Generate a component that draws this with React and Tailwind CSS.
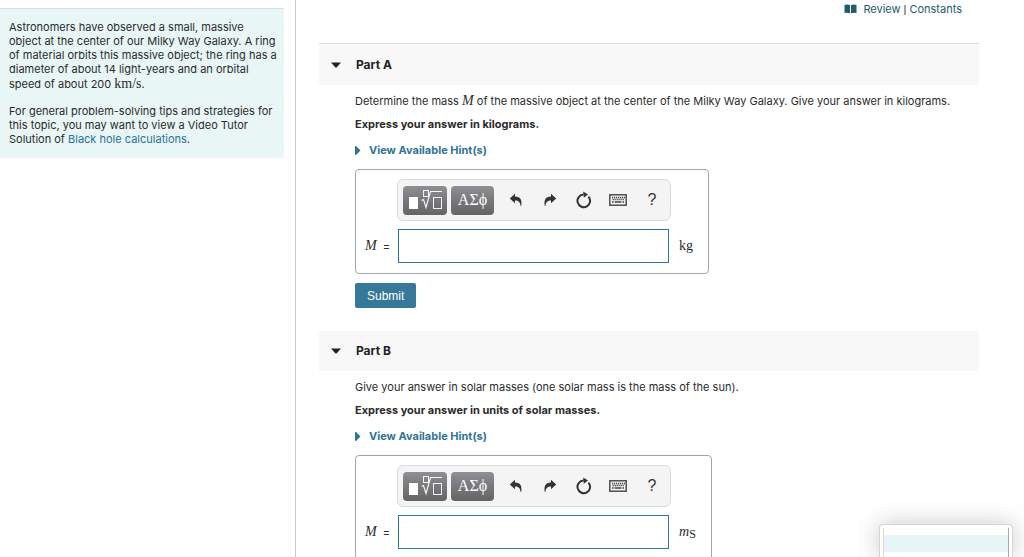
import React from 'react';

const MathText = ({ italic, children }) => (
  <span
    className={`font-['Liberation_Serif','Times_New_Roman',serif] text-sm leading-4 ${
      italic ? 'italic' : ''
    }`}
  >
    {children}
  </span>
);

const BookIcon = () => (
  <svg width="13" height="10" viewBox="0 0 13 10" fill="#245a70" aria-hidden="true">
    <path d="M0.5 1 Q3 0 6 1 V9.3 Q3 8.4 0.5 9.1Z" />
    <path d="M7 1 Q10 0 12.5 1 V9.1 Q10 8.4 7 9.3Z" />
  </svg>
);

const TemplatesIcon = () => (
  <svg width="34" height="22" viewBox="0 0 34 22" fill="none" stroke="#f4f4f4" aria-hidden="true">
    <rect x="1" y="8" width="9" height="12" fill="#fff" stroke="none" />
    <rect x="15.5" y="1.5" width="5" height="6" />
    <path d="M13.5 11.5 L15.5 10.5 L18 18.5 L22.5 2.5 H34" strokeWidth="1.2" />
    <rect x="25.5" y="8.5" width="8" height="11" />
  </svg>
);

const UndoIcon = () => (
  <svg width="14" height="14" viewBox="0 0 14 14" fill="#333" aria-hidden="true">
    <path d="M0.8 5.4 L6 0.8 V3.6 C10.8 3.6 13.4 6.6 12.2 13 H11.6 C11.2 9.2 9.4 7.6 6 7.6 V10.2 Z" />
  </svg>
);

const RedoIcon = () => (
  <svg width="14" height="14" viewBox="0 0 14 14" fill="#333" aria-hidden="true">
    <path d="M13.2 5.4 L8 0.8 V3.6 C3.2 3.6 0.6 6.6 1.8 13 H2.4 C2.8 9.2 4.6 7.6 8 7.6 V10.2 Z" />
  </svg>
);

const ResetIcon = () => (
  <svg width="16" height="18" viewBox="0 0 16 18" aria-hidden="true">
    <path d="M12.4 5.6 A6.3 6.3 0 1 1 7.6 3.6" fill="none" stroke="#333" strokeWidth="2" />
    <path d="M7.2 0.4 L12 3.6 L7.8 6.8 Z" fill="#333" />
  </svg>
);

const KeyboardIcon = () => (
  <svg width="18" height="12" viewBox="0 0 18 12" fill="none" stroke="#444" aria-hidden="true">
    <rect x="0.8" y="0.8" width="16.4" height="10.4" strokeWidth="1.4" />
    <path d="M3 3.5 H16 M3.6 5.5 H15" strokeWidth="1.4" strokeDasharray="1.2 0.8" />
    <path d="M3 8 H4.6 M5.6 8 H12.4 M13.4 8 H15" strokeWidth="1.5" />
  </svg>
);

const tools = [
  { label: 'Undo', icon: UndoIcon },
  { label: 'Redo', icon: RedoIcon },
  { label: 'Reset', icon: ResetIcon },
  { label: 'Keyboard shortcuts', icon: KeyboardIcon }
];

const darkButton =
  'flex h-[29px] items-center justify-center rounded-[4px] bg-linear-to-b from-[#8e8e94] to-[#646464] text-white';

const Toolbar = () => (
  <div className="flex h-[42px] items-center rounded-md border border-[#dcdcdc] bg-[#f4f4f4] pl-[5px]">
    <button type="button" aria-label="Templates" className={`${darkButton} w-11`}>
      <TemplatesIcon />
    </button>
    <button
      type="button"
      aria-label="Symbols"
      className={`${darkButton} ml-1 w-[43px] font-['Liberation_Serif','Times_New_Roman',serif] text-base leading-none`}
    >
      ΑΣϕ
    </button>
    <div className="ml-[5px] flex">
      {tools.map(({ label, icon: Icon }) => (
        <button
          key={label}
          type="button"
          aria-label={label}
          className="flex h-7 w-[34px] items-center justify-center"
        >
          <Icon />
        </button>
      ))}
      <button
        type="button"
        aria-label="Help"
        className="h-7 w-[34px] font-['Liberation_Sans',Arial,sans-serif] text-base text-[#333]"
      >
        ?
      </button>
    </div>
  </div>
);

const AnswerBox = ({ id, unit }) => (
  <form className="inline-grid grid-cols-[33px_271px_auto] items-center rounded-[4px] border border-[#a5a5a5] pt-[9px] pr-[15px] pb-[10px] pl-[9px]">
    <div className="col-start-2 -mx-px w-[274px]">
      <Toolbar />
    </div>
    <label htmlFor={id} className="col-start-1 mt-2 flex items-center gap-[6px]">
      <MathText italic>M</MathText>
      <span>=</span>
    </label>
    <input
      id={id}
      type="text"
      className="mt-2 h-[34px] w-full border border-[#2f7599] bg-white px-2 outline-none"
    />
    <span className="mt-2 pl-[10px]">{unit}</span>
  </form>
);

const Part = ({ id, title, question, instruction, unit, bordered, children }) => (
  <section>
    <h2
      className={`flex items-center bg-[#f8f8f8] text-xs font-bold text-[#222] ${
        bordered ? 'h-[42px] border-t border-[#dcdfdf]' : 'h-10'
      }`}
    >
      <button type="button" className="flex items-center gap-[15px] pl-3">
        <svg width="10" height="6" viewBox="0 0 10 6" fill="#222" aria-hidden="true">
          <path d="M0 0.5 H10 L5.5 5.5 H4.5Z" />
        </svg>
        {title}
      </button>
    </h2>
    <div className="flex flex-col items-start pt-2 pl-9 leading-4">
      <p>{question}</p>
      <p className="mt-[7px] font-bold">{instruction}</p>
      <button
        type="button"
        className="mt-[10px] mb-[11px] flex items-center gap-2 font-bold text-[#317595]"
      >
        <svg width="6" height="9" viewBox="0 0 6 9" fill="#317595" aria-hidden="true">
          <path d="M0 0 H1 L5.5 4.5 L1 9 H0Z" />
        </svg>
        View Available Hint(s)
      </button>
      <AnswerBox id={id} unit={unit} />
      {children}
    </div>
  </section>
);

const App = () => {
  return (
    <div className="relative flex h-screen overflow-hidden bg-white font-[Inter,'Liberation_Sans',sans-serif] text-[11px] text-[#2b2b2b]">
      <aside className="w-[296px] shrink-0 border-r border-[#c3ccd6] pt-2 pr-[11px]">
        <div className="border-t border-[#d9dfdf] bg-[#e8f6f6] pt-[11px] pr-1 pb-3 pl-[9px] leading-[14px]">
          <p>
            Astronomers have observed a small, massive
            <br />
            object at the center of our Milky Way Galaxy. A ring of material orbits this massive
            object; the ring has a diameter of about 14 light-years and an orbital speed of about
            200 <MathText>km/s</MathText>.
          </p>
          <p className="mt-3">
            For general problem-solving tips and strategies for this topic, you may want to view
            a Video Tutor Solution of{' '}
            <a href="#black-hole" className="text-[#26739c]">
              Black hole calculations
            </a>
            .
          </p>
        </div>
      </aside>

      <main className="min-w-0 flex-1 overflow-hidden pr-[45px] pl-[23px]">
        <div className="flex h-[43px] items-start justify-end gap-[3px] pt-[1px] pr-[17px] leading-4 text-[#245a70]">
          <span className="flex items-center gap-[6px]">
            <BookIcon />
            <a href="#review">Review</a>
          </span>
          <span className="font-['Liberation_Sans',Arial,sans-serif] text-[#333]">|</span>
          <a href="#constants">Constants</a>
        </div>

        <Part
          id="part-a"
          title="Part A"
          bordered
          question={
            <>
              Determine the mass <MathText italic>M</MathText> of the massive object at the center
              of the Milky Way Galaxy. Give your answer in kilograms.
            </>
          }
          instruction="Express your answer in kilograms."
          unit={<MathText>kg</MathText>}
        >
          <button
            type="submit"
            className="mt-[9px] mb-[23px] h-[25px] rounded-[2px] bg-[#367898] px-3 font-['Liberation_Sans',Arial,sans-serif] text-xs text-white"
          >
            Submit
          </button>
        </Part>

        <Part
          id="part-b"
          title="Part B"
          question="Give your answer in solar masses (one solar mass is the mass of the sun)."
          instruction="Express your answer in units of solar masses."
          unit={
            <>
              <MathText italic>m</MathText>
              <span className="relative top-[2px] font-['Liberation_Serif','Times_New_Roman',serif] text-xs">
                S
              </span>
            </>
          }
        />
      </main>

      {/* Floating preview */}
      <div className="absolute right-[11px] bottom-0 h-[33px] w-[134px] rounded-t-[4px] border border-b-0 border-[#d5d5d5] bg-white px-[3px] pt-[3px] shadow-[0_0_24px_rgba(0,0,0,0.22)]">
        <div className="h-full border-r border-l border-r-[#a8a8a8] border-l-[#d8d8d8] pt-[7px]">
          <div className="h-[17px] bg-[#e6f5f5]" />
        </div>
      </div>
    </div>
  );
};

export default App;
